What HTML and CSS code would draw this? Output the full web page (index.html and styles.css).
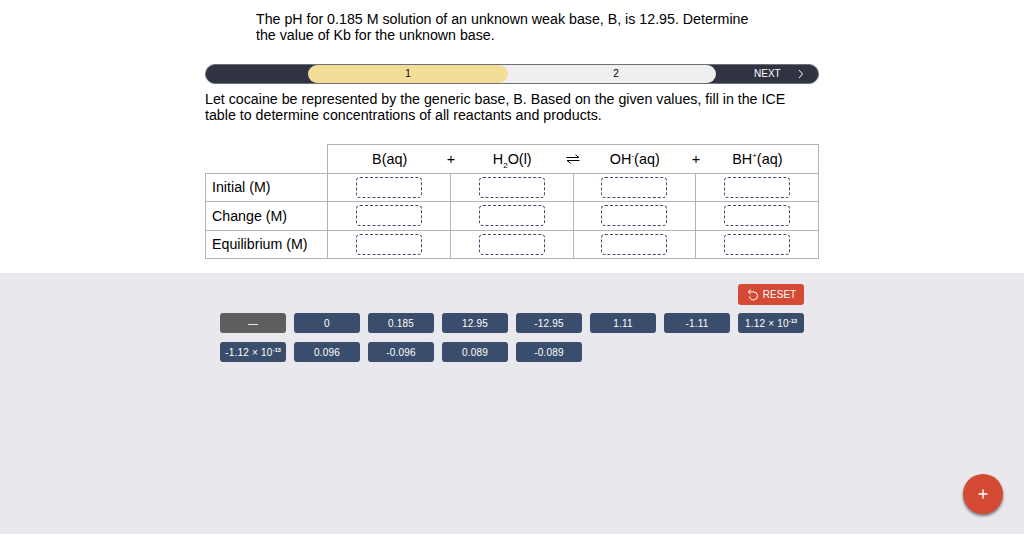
FILE: index.html
```html
<!DOCTYPE html>
<html lang="en">
<head>
  <meta charset="utf-8">
  <title>ICE Table</title>
  <link rel="stylesheet" href="styles.css">
</head>
<body>
  <div class="work-area">
    <p class="question">The pH for 0.185 M solution of an unknown weak base, B, is 12.95. Determine<br>the value of Kb for the unknown base.</p>

    <div class="stepper">
      <div class="step step-active">1</div>
      <div class="step step-upcoming">2</div>
      <div class="next">
        <span>NEXT</span>
        <svg class="next-icon" viewBox="0 0 6 10"><path d="M1 1l3.5 4L1 9"/></svg>
      </div>
    </div>

    <p class="instructions">Let cocaine be represented by the generic base, B. Based on the given values, fill in the ICE<br>table to determine concentrations of all reactants and products.</p>

    <table class="ice-table">
      <colgroup>
        <col class="label-col">
        <col><col><col><col>
      </colgroup>
      <tr class="equation-row">
        <td class="blank"></td>
        <td colspan="4">
          <div class="equation">
            <span>B(aq)</span>
            <span>+</span>
            <span>H<sub>2</sub>O(l)</span>
            <span><svg class="arrows" viewBox="0 0 14 10"><path d="M0.5 3.5h12.5M9.5 0.8l3.5 2.7M13.5 6.5h-12.5M4.5 9.2l-3.5-2.7"/></svg></span>
            <span>OH<sup>-</sup>(aq)</span>
            <span>+</span>
            <span>BH<sup>+</sup>(aq)</span>
          </div>
        </td>
      </tr>
      <tr>
        <th>Initial (M)</th>
        <td><div class="slot"></div></td>
        <td><div class="slot"></div></td>
        <td><div class="slot"></div></td>
        <td><div class="slot"></div></td>
      </tr>
      <tr>
        <th>Change (M)</th>
        <td><div class="slot"></div></td>
        <td><div class="slot"></div></td>
        <td><div class="slot"></div></td>
        <td><div class="slot"></div></td>
      </tr>
      <tr>
        <th>Equilibrium (M)</th>
        <td><div class="slot"></div></td>
        <td><div class="slot"></div></td>
        <td><div class="slot"></div></td>
        <td><div class="slot"></div></td>
      </tr>
    </table>
  </div>

  <div class="tray">
    <div class="tray-inner">
      <button class="tile reset">
        <svg class="reset-icon" viewBox="0 0 12 12"><path d="M3.6 0.8L1.2 2.9l2.4 2.1M1.4 2.9H6.6a4 4 0 1 1-4 4.6"/></svg>
        RESET
      </button>
      <div class="tiles">
        <div class="tile tile-gray">—</div>
        <div class="tile">0</div>
        <div class="tile">0.185</div>
        <div class="tile">12.95</div>
        <div class="tile">-12.95</div>
        <div class="tile">1.11</div>
        <div class="tile">-1.11</div>
        <div class="tile">1.12 × 10<sup>-13</sup></div>
        <div class="tile">-1.12 × 10<sup>-13</sup></div>
        <div class="tile">0.096</div>
        <div class="tile">-0.096</div>
        <div class="tile">0.089</div>
        <div class="tile">-0.089</div>
      </div>
    </div>
  </div>

  <button class="fab">
    <svg class="fab-icon" viewBox="0 0 10 10"><path d="M5 0.5v9M0.5 5h9"/></svg>
  </button>
</body>
</html>
```

FILE: styles.css
```css
* {
  box-sizing: border-box;
}

body {
  margin: 0;
  height: 535px;
  overflow: hidden;
  background: #fff;
  color: #000;
  font-family: "Liberation Sans", Arial, sans-serif;
  font-size: 14.22px;
}

p {
  margin: 0;
  line-height: 16px;
  white-space: nowrap;
}

sub, sup {
  font-size: 8px;
  line-height: 0;
}

.work-area {
  width: 614px;
  height: 273px;
  margin-left: 205px;
  padding-top: 11px;
}

.question {
  padding-left: 51px;
}

.stepper {
  display: flex;
  height: 20px;
  margin-top: 21px;
  padding-left: 102px;
  border: 1px solid #6e7078;
  border-radius: 10px;
  background: #2f3342;
  font-size: 10px;
  line-height: 18px;
  text-align: center;
  overflow: hidden;
}

.step {
  width: 200px;
  border-radius: 9px;
}

.step-active {
  background: #f2de98;
  z-index: 1;
}

.step-upcoming {
  width: 227px;
  margin-left: -19px;
  padding-left: 27px;
  border-radius: 0 9px 9px 0;
  background: #efefef;
}

.next {
  flex: 1;
  display: flex;
  align-items: center;
  padding-left: 38px;
  color: #fff;
}

.next-icon {
  width: 6px;
  height: 10px;
  margin-left: 17px;
  fill: none;
  stroke: #fff;
  stroke-width: 1;
}

.instructions {
  margin-top: 7px;
}

.ice-table {
  width: 614px;
  margin-top: 21px;
  border-collapse: collapse;
  table-layout: fixed;
}

.label-col {
  width: 122px;
}

.ice-table td,
.ice-table th {
  height: 28.5px;
  padding: 0;
  border: 1px solid #b4b4b4;
}

.ice-table th {
  padding-left: 6px;
  font-weight: normal;
  text-align: left;
}

.ice-table .blank {
  border-top: none;
  border-left: none;
}

.equation {
  display: flex;
  padding: 0 30px 0 31px;
  font-size: 14.4px;
  line-height: 16px;
}

.equation span {
  flex: 1;
  display: block;
  text-align: center;
  white-space: nowrap;
}

.arrows {
  width: 14px;
  height: 10px;
  fill: none;
  stroke: #000;
  stroke-width: 1;
}

.slot {
  width: 66px;
  height: 21px;
  margin: 0 auto;
  border: 1px dashed #3b4d6d;
  border-radius: 4px;
}

.tray {
  height: 261px;
  padding-top: 11px;
  background: #e9e8ed;
}

.tray-inner {
  display: flex;
  flex-direction: column;
  width: 584px;
  margin-left: 220px;
}

.tiles {
  display: grid;
  grid-template-columns: repeat(8, 66px);
  gap: 9px 8px;
  margin-top: 8px;
}

.tile {
  display: flex;
  align-items: center;
  justify-content: center;
  width: 66px;
  height: 20px;
  border-radius: 3px;
  background: #3b4d6d;
  color: #fff;
  font-size: 10px;
  letter-spacing: 0.2px;
  white-space: pre;
}

.tile sup {
  margin-top: -4px;
  font-size: 6px;
  font-weight: bold;
  letter-spacing: -0.2px;
}

.tile-gray {
  background: #5e5e5e;
}

.reset {
  align-self: flex-end;
  height: 21px;
  padding: 0 0 0 1px;
  border: none;
  background: #d44a35;
  font-family: inherit;
  letter-spacing: 0;
  white-space: normal;
}

.reset-icon {
  width: 12px;
  height: 12px;
  margin-right: 4px;
  fill: none;
  stroke: #fff;
  stroke-width: 1;
}

.fab {
  position: absolute;
  right: 21px;
  bottom: 21px;
  display: flex;
  align-items: center;
  justify-content: center;
  width: 40px;
  height: 40px;
  padding: 0;
  border: none;
  border-radius: 50%;
  background: #d44a35;
  box-shadow: 0 2px 3px rgba(0,0,0,0.5);
}

.fab-icon {
  width: 10px;
  height: 10px;
  stroke: #fff;
  stroke-width: 1.5;
}
```
